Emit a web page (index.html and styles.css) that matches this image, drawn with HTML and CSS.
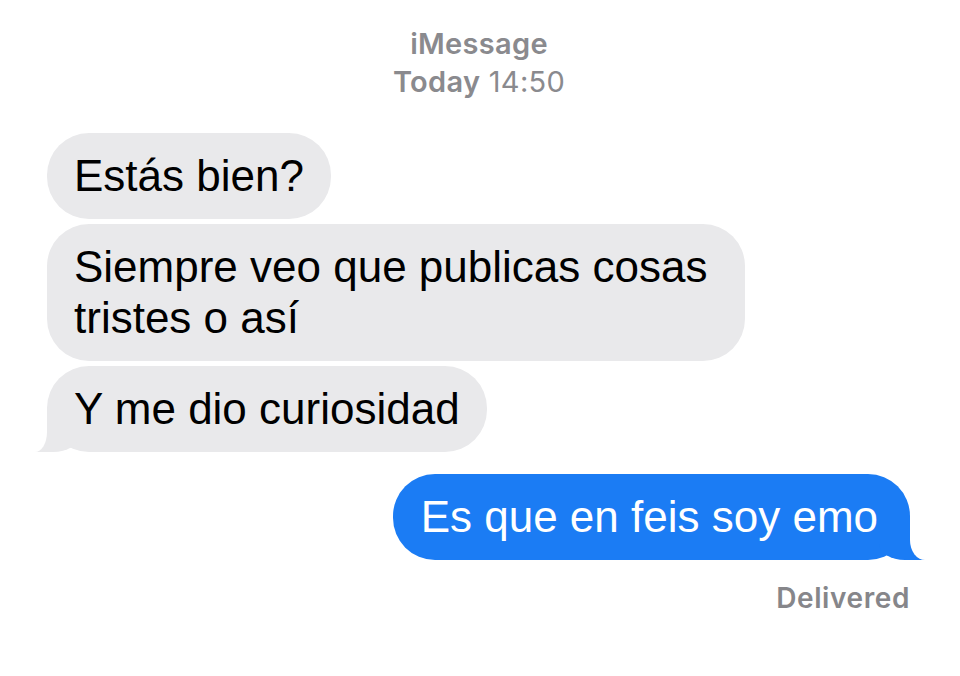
FILE: index.html
```html
<!DOCTYPE html>
<html lang="es">
<head>
<meta charset="utf-8">
<title>iMessage</title>
<link rel="stylesheet" href="styles.css">
</head>
<body>
<main class="thread">
  <header class="header">
    <div class="service">iMessage</div>
    <div class="time"><span class="day">Today</span> 14:50</div>
  </header>
  <div class="msg them">Estás bien?</div>
  <div class="msg them">Siempre veo que publicas cosas tristes o así</div>
  <div class="msg them tail">Y me dio curiosidad</div>
  <div class="msg me tail">Es que en feis soy emo</div>
  <div class="delivered">Delivered</div>
</main>
</body>
</html>
```

FILE: styles.css
```css
html, body {
  margin: 0;
  background: #ffffff;
}

body {
  font-family: "Liberation Sans", Arial, sans-serif;
  -webkit-font-smoothing: antialiased;
}

.thread {
  display: flex;
  flex-direction: column;
  padding: 25px 50px 0 47px;
}

.header {
  text-align: center;
  color: #8a8a8e;
  font-family: Inter, "Liberation Sans", Arial, sans-serif;
  font-size: 29px;
  line-height: 38px;
  letter-spacing: 0.3px;
  margin: 0 -1px 32px 0;
}

.service,
.day {
  font-weight: 600;
}

.msg {
  position: relative;
  z-index: 0;
  box-sizing: border-box;
  max-width: 698px;
  padding: 17px 27px 18px 27px;
  border-radius: 42px;
  font-size: 44px;
  line-height: 51px;
}

.msg + .msg {
  margin-top: 5px;
}

.them {
  align-self: flex-start;
  background: #e9e9eb;
  color: #000000;
}

.me {
  align-self: flex-end;
  background: #1b7cf4;
  color: #ffffff;
  padding: 17px 32px 18px 28px;
}

.msg.me {
  margin-top: 22px;
}

.tail::before,
.tail::after {
  content: "";
  position: absolute;
  bottom: 0;
  z-index: -1;
}

.them.tail::before {
  left: -12px;
  width: 44px;
  height: 42px;
  background: #e9e9eb;
  border-bottom-right-radius: 26px 16px;
}

.them.tail::after {
  left: -24px;
  width: 24px;
  height: 44px;
  background: #ffffff;
  border-bottom-right-radius: 12px 20px;
}

.me.tail::before {
  right: -15px;
  width: 46px;
  height: 42px;
  background: #1b7cf4;
  border-bottom-left-radius: 26px 16px;
}

.me.tail::after {
  right: -27px;
  width: 27px;
  height: 44px;
  background: #ffffff;
  border-bottom-left-radius: 15px 20px;
}

.delivered {
  align-self: flex-end;
  margin-top: 23px;
  margin-right: 0;
  color: #86868a;
  font-family: Inter, "Liberation Sans", Arial, sans-serif;
  font-size: 28px;
  font-weight: 600;
  line-height: 30px;
  letter-spacing: 0.6px;
}
```
